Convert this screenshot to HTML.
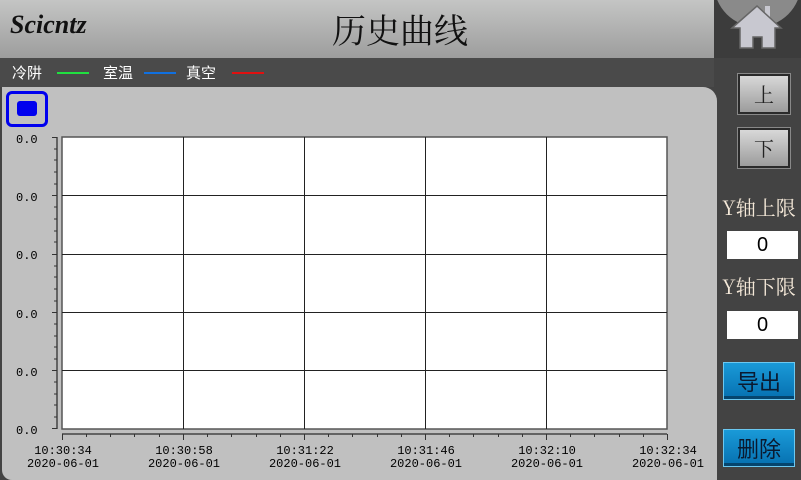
<!DOCTYPE html>
<html><head><meta charset="utf-8"><style>
*{margin:0;padding:0;box-sizing:border-box}
body{width:801px;height:480px;overflow:hidden;background:#434343;position:relative;font-family:"Liberation Sans","Noto Sans CJK SC",sans-serif}
.a{position:absolute}
.hdr{left:0;top:0;width:714px;height:58px;background:linear-gradient(#c4c5c4,#9d9d9d)}
.band{left:0;top:58px;width:714px;height:29px;background:#4a4a4a}
.panel{left:2px;top:87px;width:715px;height:393px;background:#c0c0c0;border-radius:0 14px 0 10px}
.gbtn{width:52px;height:40px;border:2px solid #2a2a2a;outline:1px solid #888;background:linear-gradient(#d8d8d8,#9c9c9c);font:20px "Noto Serif CJK SC",serif;color:#222;text-align:center;line-height:36px}
.bbtn{width:72px;height:38px;border:1px solid #6cc8f0;background:linear-gradient(#1a9ad8,#0670b0);box-shadow:inset 0 -3px 0 #05456e;font:22px "Noto Sans CJK SC",sans-serif;color:#0a1a30;text-align:center;line-height:36px}
.inp{width:71px;height:28px;background:#fff;font:20px "Liberation Sans",sans-serif;text-align:center;line-height:28px;color:#000}
.lbl{color:#f4e8d8;font:20px "Noto Serif CJK SC",serif;left:722px;width:80px;white-space:nowrap}
</style></head><body>
<div class="a hdr"></div>
<div class="a" style="left:10px;top:10px;font:italic bold 26px 'Liberation Serif',serif;color:#111">Scicntz</div>
<div class="a" style="left:332px;top:4px;font:34px 'Noto Serif CJK SC',serif;color:#111">历史曲线</div>
<div class="a" style="left:714px;top:0;width:87px;height:58px;background:#3c3c3c;overflow:hidden">
<div class="a" style="left:0;top:-60px;width:87px;height:87px;border-radius:50%;background:#8a8a8a"></div>
<svg class="a" style="left:0;top:0" width="87" height="58"><rect x="51" y="6" width="5" height="14" fill="#c8c8d0"/><path d="M18 28 L43 6 L67 28 L61 28 L61 48 L48 48 L48 37 L39 37 L39 48 L26 48 L26 28Z" fill="#c8c8d0" stroke="#666" stroke-width="1.5"/></svg>
</div>
<div class="a band"></div>
<div class="a" style="left:12px;top:62px;color:#fff;font:15px 'Noto Sans CJK SC',sans-serif;white-space:nowrap">冷阱</div>
<div class="a" style="left:57px;top:72px;width:32px;height:2px;background:#20e040"></div>
<div class="a" style="left:103px;top:62px;color:#fff;font:15px 'Noto Sans CJK SC',sans-serif">室温</div>
<div class="a" style="left:144px;top:72px;width:32px;height:2px;background:#1070e0"></div>
<div class="a" style="left:186px;top:62px;color:#fff;font:15px 'Noto Sans CJK SC',sans-serif">真空</div>
<div class="a" style="left:232px;top:72px;width:32px;height:2px;background:#e01010"></div>
<div class="a panel"></div>
<div class="a" style="left:6px;top:91px;width:42px;height:36px;border:3px solid #0000ee;border-radius:6px"></div>
<div class="a" style="left:17px;top:101px;width:20px;height:15px;background:#0000ee;border-radius:3px"></div>
<svg class="a" style="left:0;top:87px" width="717" height="393" font-family="Liberation Mono, monospace" font-size="12" fill="#000">
<g transform="translate(0,-87)">
<rect x="62" y="137" width="605" height="292" fill="#fff" stroke="#555" stroke-width="1.5"/>
<g stroke="#222" stroke-width="1">
<line x1="183.5" y1="137" x2="183.5" y2="429"/><line x1="304.5" y1="137" x2="304.5" y2="429"/><line x1="425.5" y1="137" x2="425.5" y2="429"/><line x1="546.5" y1="137" x2="546.5" y2="429"/>
<line x1="62" y1="195.5" x2="667" y2="195.5"/><line x1="62" y1="254.5" x2="667" y2="254.5"/><line x1="62" y1="312.5" x2="667" y2="312.5"/><line x1="62" y1="370.5" x2="667" y2="370.5"/>
</g>
<g stroke="#444" stroke-width="1.5"><line x1="57" y1="137" x2="57" y2="429"/><line x1="62" y1="434" x2="667" y2="434"/></g>
<g stroke="#333" stroke-width="1">
<path d="M52 137.5h5M52 195.5h5M52 254.5h5M52 312.5h5M52 370.5h5M52 428.5h5"/>
<path d="M54 149h3M54 160h3M54 172h3M54 184h3M54 207h3M54 219h3M54 231h3M54 242h3M54 266h3M54 277h3M54 289h3M54 301h3M54 324h3M54 336h3M54 347h3M54 359h3M54 382h3M54 394h3M54 405h3M54 417h3"/>
<path d="M62.5 434v6M183.5 434v6M304.5 434v6M425.5 434v6M546.5 434v6M667.5 434v6"/>
<path d="M86.5 434v3M110.5 434v3M134.5 434v3M159.5 434v3M207.5 434v3M231.5 434v3M256.5 434v3M280.5 434v3M328.5 434v3M352.5 434v3M377.5 434v3M401.5 434v3M449.5 434v3M473.5 434v3M498.5 434v3M522.5 434v3M570.5 434v3M594.5 434v3M619.5 434v3M643.5 434v3"/>
</g>
<text x="16" y="143">0.0</text><text x="16" y="201">0.0</text><text x="16" y="259">0.0</text><text x="16" y="318">0.0</text><text x="16" y="376">0.0</text><text x="16" y="434">0.0</text>
<g text-anchor="middle">
<text x="63" y="454">10:30:34</text><text x="63" y="467">2020-06-01</text>
<text x="184" y="454">10:30:58</text><text x="184" y="467">2020-06-01</text>
<text x="305" y="454">10:31:22</text><text x="305" y="467">2020-06-01</text>
<text x="426" y="454">10:31:46</text><text x="426" y="467">2020-06-01</text>
<text x="547" y="454">10:32:10</text><text x="547" y="467">2020-06-01</text>
<text x="668" y="454">10:32:34</text><text x="668" y="467">2020-06-01</text>
</g></g></svg>
<div class="a gbtn" style="left:738px;top:74px">上</div>
<div class="a gbtn" style="left:738px;top:128px">下</div>
<div class="a lbl" style="top:192px">Y轴上限</div>
<div class="a inp" style="left:727px;top:231px">0</div>
<div class="a lbl" style="top:271px">Y轴下限</div>
<div class="a inp" style="left:727px;top:311px">0</div>
<div class="a bbtn" style="left:723px;top:362px">导出</div>
<div class="a bbtn" style="left:723px;top:429px">删除</div>
</body></html>
